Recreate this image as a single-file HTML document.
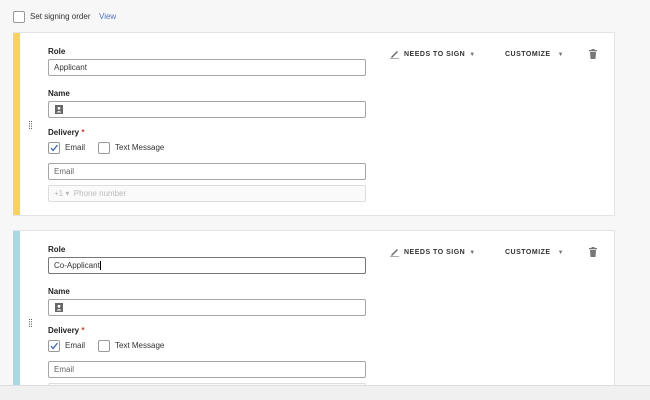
<!DOCTYPE html>
<html><head><style>
*{box-sizing:border-box;margin:0;padding:0}
body{width:650px;height:400px;overflow:hidden;background:#f7f7f7;font-family:"Liberation Sans",Arial,sans-serif;position:relative;color:#222}
.a{position:absolute}
.cb{position:absolute;width:12px;height:12px;border:1px solid #999;border-radius:2px;background:#fff}
.card{position:absolute;left:13px;width:602px;background:#fff;border:1px solid #e3e3e3;border-left:none}
.bar{position:absolute;left:0;top:0;bottom:0;width:7px}
.lbl{position:absolute;left:35px;font-size:8px;font-weight:bold;color:#222}
.inp{position:absolute;left:35px;width:318px;height:17px;border:1px solid #a5a5a5;border-radius:2px;background:#fff;font-size:8px;padding-left:5px;line-height:15px;color:#333}
.act{position:absolute;font-size:7px;font-weight:bold;letter-spacing:.5px;color:#333}
.tri{font-size:6px;color:#777;margin-left:4px;font-weight:normal}
</style></head><body>
<div class="cb" style="left:13px;top:11px"></div>
<div class="a" style="left:30px;top:12px;font-size:8px;color:#333">Set signing order</div>
<div class="a" style="left:99px;top:12px;font-size:8px;color:#4a74d6">View</div>

<div class="card" style="top:32px;height:184px">
<div class="bar" style="background:#ffd257"></div>
<div class="lbl" style="top:14px">Role</div>
<div class="inp" style="top:26px">Applicant</div>
<div class="lbl" style="top:56px">Name</div>
<div class="inp" style="top:68px"><svg width="9" height="9" viewBox="0 0 9 9" style="margin-top:3px"><rect x="1" y="0" width="8" height="9" fill="#666"/><circle cx="5" cy="3.3" r="1.4" fill="#fff"/><path d="M2.5 7.5 Q5 4.5 7.5 7.5Z" fill="#fff"/></svg></div>
<svg class="a" style="left:16px;top:88px" width="4" height="8" viewBox="0 0 4 8"><g fill="#555"><rect x="0" y="0" width="1" height="1"/><rect x="2" y="0" width="1" height="1"/><rect x="0" y="2.3" width="1" height="1"/><rect x="2" y="2.3" width="1" height="1"/><rect x="0" y="4.6" width="1" height="1"/><rect x="2" y="4.6" width="1" height="1"/><rect x="0" y="6.9" width="1" height="1"/><rect x="2" y="6.9" width="1" height="1"/></g></svg>
<div class="lbl" style="top:95px">Delivery <span style="color:#d33">*</span></div>
<div class="cb" style="left:35px;top:109px"><svg width="10" height="10" viewBox="0 0 10 10" class="a" style="left:0;top:0"><path d="M2 5 L4 7.5 L8.5 2" stroke="#2a62d4" stroke-width="1.2" fill="none"/></svg></div>
<div class="a" style="left:52px;top:110px;font-size:8px;color:#333">Email</div>
<div class="cb" style="left:85px;top:109px"></div>
<div class="a" style="left:102px;top:110px;font-size:8px;color:#333">Text Message</div>
<div class="inp" style="top:130px;color:#666">Email</div>
<div class="inp" style="top:152px;border-color:#ddd;background:#fafafa;color:#bbb">+1 ▾ &nbsp;Phone number</div>
<svg class="a" style="left:377px;top:17px" width="10" height="9" viewBox="0 0 10 9"><path d="M1 7 L7 1 L8 2 L2 8Z" fill="#666"/><path d="M0 8.5 H9" stroke="#999" stroke-width=".8"/></svg>
<div class="act" style="left:391px;top:18px">NEEDS TO SIGN<span class="tri">▼</span></div>
<div class="act" style="left:492px;top:18px">CUSTOMIZE<span class="tri" style="margin-left:7px">▼</span></div>
<svg class="a" style="left:576px;top:16px" width="8" height="10" viewBox="0 0 8 10"><rect x="0" y="1" width="8" height="1.3" fill="#777"/><rect x="2.5" y="0" width="3" height="1.2" fill="#777"/><path d="M1 3 H7 L6.5 10 H1.5Z" fill="#777"/></svg>
</div>

<div class="card" style="top:230px;height:170px">
<div class="bar" style="background:#a6d9e6"></div>
<div class="lbl" style="top:14px">Role</div>
<div class="inp" style="top:26px;border-color:#777">Co-Applicant<span style="border-left:1px solid #000">&#8203;</span></div>
<div class="lbl" style="top:56px">Name</div>
<div class="inp" style="top:68px"><svg width="9" height="9" viewBox="0 0 9 9" style="margin-top:3px"><rect x="1" y="0" width="8" height="9" fill="#666"/><circle cx="5" cy="3.3" r="1.4" fill="#fff"/><path d="M2.5 7.5 Q5 4.5 7.5 7.5Z" fill="#fff"/></svg></div>
<svg class="a" style="left:16px;top:88px" width="4" height="8" viewBox="0 0 4 8"><g fill="#555"><rect x="0" y="0" width="1" height="1"/><rect x="2" y="0" width="1" height="1"/><rect x="0" y="2.3" width="1" height="1"/><rect x="2" y="2.3" width="1" height="1"/><rect x="0" y="4.6" width="1" height="1"/><rect x="2" y="4.6" width="1" height="1"/><rect x="0" y="6.9" width="1" height="1"/><rect x="2" y="6.9" width="1" height="1"/></g></svg>
<div class="lbl" style="top:95px">Delivery <span style="color:#d33">*</span></div>
<div class="cb" style="left:35px;top:109px"><svg width="10" height="10" viewBox="0 0 10 10" class="a" style="left:0;top:0"><path d="M2 5 L4 7.5 L8.5 2" stroke="#2a62d4" stroke-width="1.2" fill="none"/></svg></div>
<div class="a" style="left:52px;top:110px;font-size:8px;color:#333">Email</div>
<div class="cb" style="left:85px;top:109px"></div>
<div class="a" style="left:102px;top:110px;font-size:8px;color:#333">Text Message</div>
<div class="inp" style="top:130px;color:#666">Email</div>
<div class="inp" style="top:152px;border-color:#ddd;background:#fafafa"></div>
<svg class="a" style="left:377px;top:17px" width="10" height="9" viewBox="0 0 10 9"><path d="M1 7 L7 1 L8 2 L2 8Z" fill="#666"/><path d="M0 8.5 H9" stroke="#999" stroke-width=".8"/></svg>
<div class="act" style="left:391px;top:18px">NEEDS TO SIGN<span class="tri">▼</span></div>
<div class="act" style="left:492px;top:18px">CUSTOMIZE<span class="tri" style="margin-left:7px">▼</span></div>
<svg class="a" style="left:576px;top:16px" width="8" height="10" viewBox="0 0 8 10"><rect x="0" y="1" width="8" height="1.3" fill="#777"/><rect x="2.5" y="0" width="3" height="1.2" fill="#777"/><path d="M1 3 H7 L6.5 10 H1.5Z" fill="#777"/></svg>
</div>

<div class="a" style="left:0;top:385px;width:650px;height:15px;background:#f0f0f0;border-top:1px solid #ddd"></div>
</body></html>
